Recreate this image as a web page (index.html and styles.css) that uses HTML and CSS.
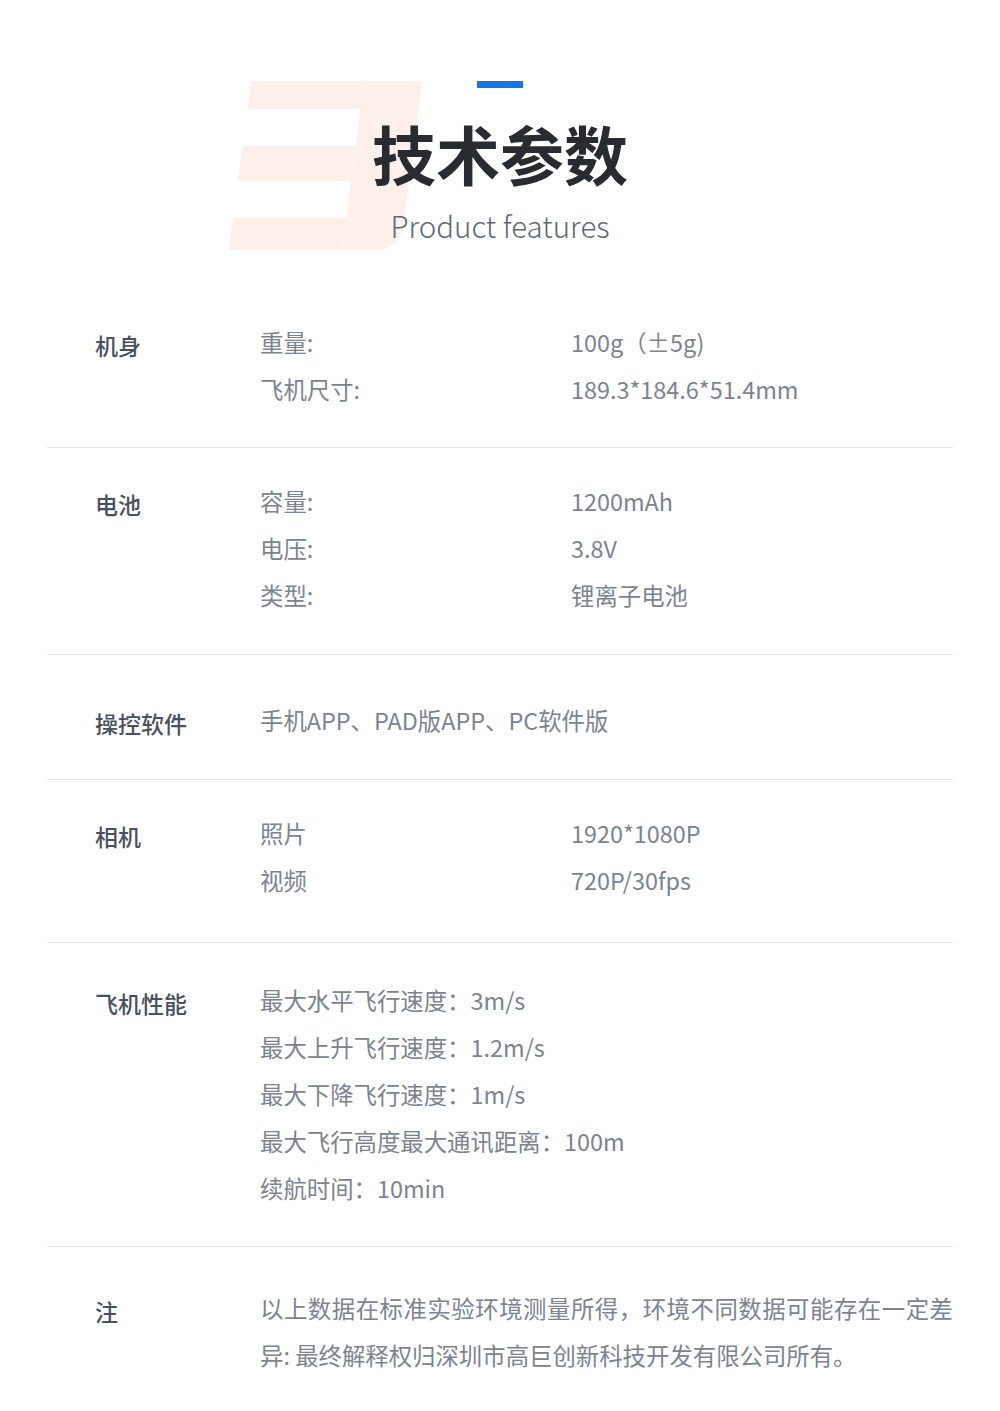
FILE: index.html
```html
<!DOCTYPE html>
<html lang="zh-CN">
<head>
<meta charset="utf-8">
<title>技术参数</title>
<link rel="stylesheet" href="styles.css">
</head>
<body>
<header class="header">
  <div class="deco" aria-hidden="true">
    <div class="deco-bars">
      <div class="deco-bar deco-bar-top"></div>
      <div class="deco-bar deco-bar-mid"></div>
      <div class="deco-bar deco-bar-bot"></div>
    </div>
    <div class="deco-col"></div>
  </div>
  <div class="accent"></div>
  <h1 class="title">技术参数</h1>
  <p class="subtitle">Product features</p>
</header>

<main class="specs">
  <section class="spec-row spec-row-body">
    <div class="spec-label">机身</div>
    <dl class="spec-pairs">
      <dt>重量:</dt><dd>100g（±5g)</dd>
      <dt>飞机尺寸:</dt><dd>189.3*184.6*51.4mm</dd>
    </dl>
  </section>

  <section class="spec-row spec-row-battery">
    <div class="spec-label">电池</div>
    <dl class="spec-pairs">
      <dt>容量:</dt><dd>1200mAh</dd>
      <dt>电压:</dt><dd>3.8V</dd>
      <dt>类型:</dt><dd>锂离子电池</dd>
    </dl>
  </section>

  <section class="spec-row spec-row-single">
    <div class="spec-label">操控软件</div>
    <div class="spec-list">
      <p>手机APP、PAD版APP、PC软件版</p>
    </div>
  </section>

  <section class="spec-row spec-row-camera">
    <div class="spec-label">相机</div>
    <dl class="spec-pairs">
      <dt>照片</dt><dd>1920*1080P</dd>
      <dt>视频</dt><dd>720P/30fps</dd>
    </dl>
  </section>

  <section class="spec-row spec-row-perf">
    <div class="spec-label">飞机性能</div>
    <div class="spec-list">
      <p>最大水平飞行速度：3m/s</p>
      <p>最大上升飞行速度：1.2m/s</p>
      <p>最大下降飞行速度：1m/s</p>
      <p>最大飞行高度最大通讯距离：100m</p>
      <p>续航时间：10min</p>
    </div>
  </section>

  <section class="spec-row spec-row-note">
    <div class="spec-label">注</div>
    <p class="spec-note">以上数据在标准实验环境测量所得，环境不同数据可能存在一定差异: 最终解释权归深圳市高巨创新科技开发有限公司所有。</p>
  </section>
</main>
</body>
</html>
```
FILE: styles.css
```css
* {
  box-sizing: border-box;
}

html, body {
  margin: 0;
  padding: 0;
  background: #ffffff;
}

body {
  width: 1000px;
  font-family: "Noto Sans CJK SC", "Noto Sans", sans-serif;
  color: #7b848f;
}

/* ---------- header ---------- */
.header {
  position: relative;
  z-index: 0;
  padding-top: 81px;
  text-align: center;
}

.deco {
  position: absolute;
  z-index: -1;
  left: 240px;
  top: 81px;
  width: 171px;
  height: 169px;
  display: flex;
  transform: skewX(-7.5deg);
}

.deco-bars {
  flex: 1;
  display: flex;
  flex-direction: column;
  justify-content: space-between;
}

.deco-bar {
  background: #fdefea;
}

.deco-bar-top { height: 28px; }
.deco-bar-mid { height: 35px; }
.deco-bar-bot { height: 32px; }

.deco-col {
  width: 58px;
  background: #fdefea;
  border-bottom-right-radius: 22px;
}

.accent {
  width: 46px;
  height: 7px;
  margin: 0 auto;
  background: #1a74e8;
}

.title {
  margin: 32px 0 0;
  font-size: 64px;
  line-height: 64px;
  font-weight: 700;
  color: #282b2f;
}

.subtitle {
  margin: 23px 0 0;
  font-size: 29.5px;
  line-height: 36px;
  font-weight: 300;
  color: #5d6876;
}

/* ---------- specs ---------- */
.specs {
  margin: 45px 47px 0;
}

.spec-row {
  display: grid;
  grid-template-columns: 165px 1fr;
  align-items: start;
  padding-left: 48px;
  border-bottom: 1px solid #e4e4ea;
}

.spec-row-body    { padding-top: 31px; padding-bottom: 34px; }
.spec-row-battery { padding-top: 30px; padding-bottom: 35px; }
.spec-row-single  { padding-top: 42px; padding-bottom: 35px; }
.spec-row-camera  { padding-top: 30px; padding-bottom: 38px; }
.spec-row-perf    { padding-top: 34px; padding-bottom: 34px; }
.spec-row-note    { padding-top: 38px; padding-bottom: 20px; border-bottom: none; }

.spec-label {
  padding-top: 6px;
  font-size: 23px;
  line-height: 41px;
  font-weight: 500;
  color: #48525e;
}

.spec-pairs {
  display: grid;
  grid-template-columns: 311px 1fr;
  margin: 0;
  font-size: 23.4px;
  line-height: 47px;
  font-weight: 400;
}

.spec-pairs dt,
.spec-pairs dd {
  margin: 0;
}

.spec-list p {
  margin: 0;
  font-size: 23.4px;
  line-height: 47px;
}

.spec-note {
  margin: 0;
  font-size: 23.4px;
  line-height: 47px;
  text-align: justify;
}
```
